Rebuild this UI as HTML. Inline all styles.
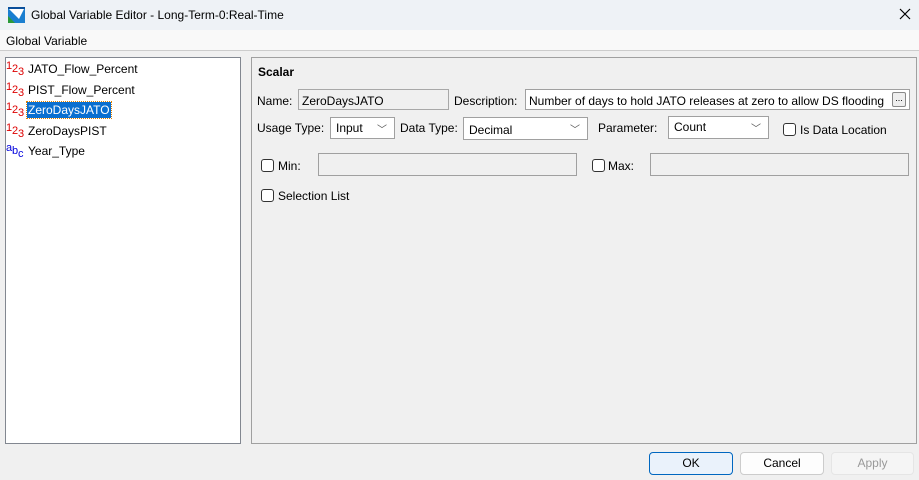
<!DOCTYPE html>
<html><head><style>
*{margin:0;padding:0;box-sizing:border-box}
body{width:919px;height:480px;background:#f0f0f0;font-family:"Liberation Sans",sans-serif;font-size:12px;color:#000;position:relative;overflow:hidden}
.a{position:absolute}
.t{white-space:nowrap}
.inp{position:absolute;background:#fff;border:1px solid #a0a0a0}
.cb{position:absolute;width:13px;height:13px;border:1px solid #333;border-radius:3px;background:#fff}
.sel{position:absolute;background:#fff;border:1px solid #a0a0a0}
.sel span{position:absolute;left:5px;top:3px}
.sel i{position:absolute;right:7px;top:3px;font-style:normal;color:#555;font-size:10px}
.btn{position:absolute;height:23px;border:1px solid #ccc;border-radius:4px;background:#fdfdfd;text-align:center;line-height:21px}
.row{height:20.5px;position:relative;padding-left:22px}
.ic{position:absolute;left:0;top:-2px;font-size:11px;color:#d00;width:22px;height:18px}
.ic b{position:absolute;font-weight:normal}
</style></head><body>
<div class="a" style="left:0;top:0;width:919px;height:30px;background:#eef2f6"></div>
<svg class="a" style="left:8px;top:7px" width="17" height="16" viewBox="0 0 17 16"><rect width="17" height="16" fill="#1a7fd0"/><polygon points="1,2 16,2 11,12" fill="#fff"/><polygon points="0,9 7,16 0,16" fill="#2a9a3a"/><rect x="0" y="0" width="17" height="2" fill="#0a4f9a"/></svg>
<div class="a t" style="left:31px;top:8px;font-size:12px">Global Variable Editor - Long-Term-0:Real-Time</div>
<svg class="a" style="left:899px;top:8px" width="12" height="12" viewBox="0 0 12 12"><path d="M1 1L11 11M11 1L1 11" stroke="#000" stroke-width="1.2"/></svg>
<div class="a" style="left:0;top:30px;width:919px;height:20px;background:#f9f9f9"></div>
<div class="a t" style="left:6px;top:34px">Global Variable</div>
<div class="a" style="left:0;top:50px;width:919px;height:1px;background:#ccc"></div>

<div class="a" style="left:5px;top:57px;width:236px;height:387px;background:#fff;border:1px solid #828790"></div>
<div class="a t" style="left:6px;top:62px;font-size:12px">
<div class="row"><span class="ic"><b style="left:0;top:0">1</b><b style="left:6px;top:3px">2</b><b style="left:12px;top:6px">3</b></span>JATO_Flow_Percent</div>
<div class="row"><span class="ic"><b style="left:0;top:0">1</b><b style="left:6px;top:3px">2</b><b style="left:12px;top:6px">3</b></span>PIST_Flow_Percent</div>
<div class="row"><span class="ic"><b style="left:0;top:0">1</b><b style="left:6px;top:3px">2</b><b style="left:12px;top:6px">3</b></span><span style="background:#0a6fd0;color:#fff;outline:1px dotted #e08000;padding:1px 1px;margin-left:-1px">ZeroDaysJATO</span></div>
<div class="row"><span class="ic"><b style="left:0;top:0">1</b><b style="left:6px;top:3px">2</b><b style="left:12px;top:6px">3</b></span>ZeroDaysPIST</div>
<div class="row"><span class="ic" style="color:#00d"><b style="left:0;top:0">a</b><b style="left:6px;top:3px">b</b><b style="left:12px;top:6px">c</b></span>Year_Type</div>
</div>

<div class="a" style="left:251px;top:57px;width:666px;height:387px;border:1px solid #a0a0a0"></div>
<div class="a t" style="left:258px;top:65px;font-weight:bold">Scalar</div>
<div class="a t" style="left:257px;top:94px">Name:</div>
<div class="inp" style="left:298px;top:89px;width:151px;height:21px;background:#f0f0f0;border-color:#a8a8a8"><span class="a t" style="left:3px;top:4px">ZeroDaysJATO</span></div>
<div class="a t" style="left:454px;top:94px">Description:</div>
<div class="inp" style="left:525px;top:89px;width:385px;height:21px;overflow:hidden"><span class="a t" style="left:3px;top:4px">Number of days to hold JATO releases at zero to allow DS flooding</span><span class="a" style="left:366px;top:2px;width:14px;height:15px;border:1px solid #888;border-radius:2px;background:#eee;font-size:9px;text-align:center;line-height:11px">...</span></div>
<div class="a t" style="left:257px;top:121px">Usage Type:</div>
<div class="sel" style="left:330px;top:117px;width:65px;height:22px"><span>Input</span><i>﹀</i></div>
<div class="a t" style="left:400px;top:121px">Data Type:</div>
<div class="sel" style="left:463px;top:117px;width:125px;height:23px"><span style="top:5px">Decimal</span><i>﹀</i></div>
<div class="a t" style="left:598px;top:121px">Parameter:</div>
<div class="sel" style="left:668px;top:116px;width:101px;height:23px"><span>Count</span><i>﹀</i></div>
<div class="cb" style="left:783px;top:123px"></div>
<div class="a t" style="left:800px;top:123px">Is Data Location</div>
<div class="cb" style="left:261px;top:159px"></div>
<div class="a t" style="left:278px;top:159px">Min:</div>
<div class="inp" style="left:318px;top:153px;width:259px;height:23px;background:#f0f0f0"></div>
<div class="cb" style="left:592px;top:159px"></div>
<div class="a t" style="left:608px;top:159px">Max:</div>
<div class="inp" style="left:650px;top:153px;width:259px;height:23px;background:#f0f0f0"></div>
<div class="cb" style="left:261px;top:189px"></div>
<div class="a t" style="left:278px;top:189px">Selection List</div>

<div class="btn" style="left:649px;top:452px;width:84px;border-color:#0067c0;background:#eaf2fb">OK</div>
<div class="btn" style="left:740px;top:452px;width:84px">Cancel</div>
<div class="btn" style="left:831px;top:452px;width:83px;color:#999;background:#f5f5f5;border-color:#e5e5e5">Apply</div>
</body></html>
